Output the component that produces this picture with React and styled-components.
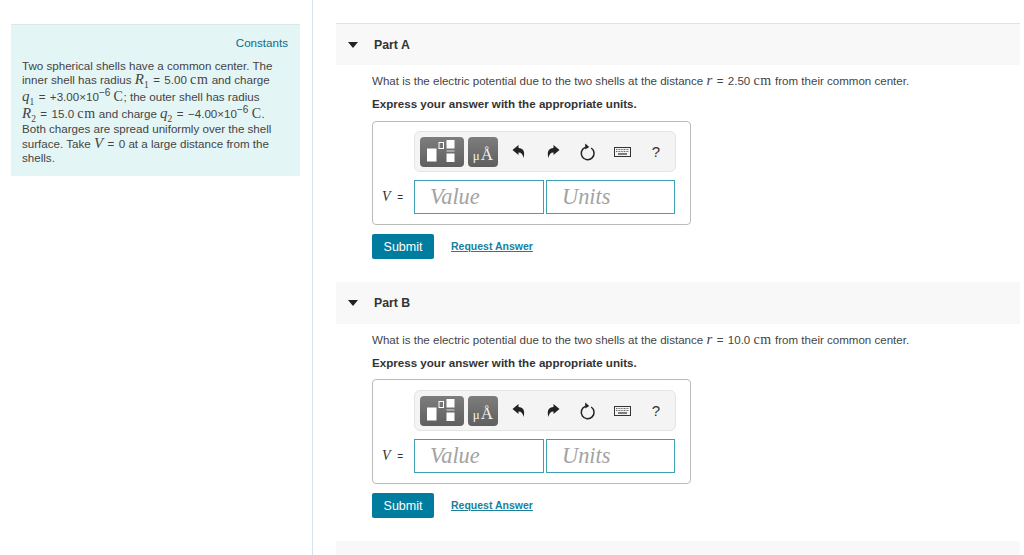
import React from 'react';
import styled, { createGlobalStyle } from 'styled-components';

const GlobalStyle = createGlobalStyle`
html, body {
  margin: 0;
  padding: 0;
  background: #fff;
  overflow: hidden;
}
body {
  font-family: "Liberation Sans", Arial, sans-serif;
  color: #333;
}
`;

const Page = styled.div`
display: flex;
width: 1024px;
height: 555px;
overflow: hidden;
`;

const Sidebar = styled.aside`
box-sizing: border-box;
width: 313px;
height: 555px;
flex: none;
padding: 24px 12px 0 11px;
border-right: 1px solid #d4e3ee;
`;

const InfoPanel = styled.div`
box-sizing: border-box;
height: 152px;
padding: 11px 12px 0 11px;
background: #e4f5f6;
border-top: 1px solid #dbe7ea;
`;

const ConstantsLink = styled.div`
text-align: right;
font-size: 11.6px;
line-height: 14px;
color: #0f6a85;
margin-bottom: 8px;
`;

const InfoLine = styled.div`
height: ${p => p.$h}px;
font-size: 11.6px;
line-height: ${p => p.$h}px;
color: #444;
white-space: nowrap;
`;

const Main = styled.main`
flex: none;
width: 684px;
margin-left: 23px;
padding-top: 23px;
`;

const Section = styled.section`
height: 259px;
`;

const PartHeader = styled.div`
box-sizing: border-box;
display: flex;
align-items: center;
height: 42px;
background: #f8f8f8;
border-top: ${p => (p.$ruled ? '1px solid #e2e2e2' : '0')};
`;

const Caret = styled.span`
width: 0;
height: 0;
margin-left: 12px;
margin-right: 16px;
border-left: 5px solid transparent;
border-right: 5px solid transparent;
border-top: 6px solid #222;
`;

const PartTitle = styled.h2`
margin: 0;
font-size: 12.3px;
font-weight: 700;
color: #333;
`;

const Body = styled.div`
padding: 9px 0 0 36px;
`;

const Question = styled.p`
margin: 0 0 7px;
font-size: 11.55px;
line-height: 15px;
color: #444;
white-space: nowrap;
`;

const Instruction = styled.p`
margin: 0 0 ${p => (p.$low ? 10 : 9)}px;
font-size: 11.6px;
line-height: 15px;
font-weight: 700;
color: #333;
`;

const AnswerBox = styled.div`
box-sizing: border-box;
width: 319px;
height: ${p => (p.$low ? 104 : 105)}px;
padding: ${p => (p.$low ? 9 : 10)}px 15px 0 9px;
border: 1px solid #bbb;
border-radius: 4px;
`;

const Toolbar = styled.div`
box-sizing: border-box;
display: flex;
align-items: center;
width: 262px;
height: 41px;
margin-left: 32px;
padding-left: 5px;
background: #f4f4f4;
border: 1px solid #e4e4e4;
border-radius: 6px;
`;

const TemplateButton = styled.div`
display: flex;
align-items: center;
justify-content: center;
box-sizing: border-box;
flex: none;
width: ${p => p.$w}px;
height: 30px;
margin-right: 4px;
border-radius: 4px;
background: linear-gradient(#7d7d7d, #5f5f5f);
color: #f2f2f2;
svg { display: block; }
`;

const UnitButton = styled(TemplateButton)`
align-items: baseline;
font-family: "Liberation Serif", serif;
font-size: 17px;
line-height: 35px;
`;

const MicroSign = styled.span`
font-size: 13px;
margin-right: 1px;
`;

const ToolIcon = styled.div`
display: flex;
align-items: center;
justify-content: center;
flex: none;
width: ${p => p.$w}px;
color: #333;
font-size: 15px;
`;

const InputRow = styled.div`
display: flex;
align-items: center;
margin-top: 8px;
`;

const VarLabel = styled.div`
flex: none;
width: 32px;
font-size: 10px;
color: #333;
white-space: nowrap;
word-spacing: 4px;
i { font-family: "Liberation Serif", serif; font-size: 14px; }
`;

const Field = styled.div`
box-sizing: border-box;
display: flex;
align-items: center;
flex: none;
width: ${p => p.$w}px;
height: 34px;
margin-right: 2px;
padding-left: 15px;
border: 1px solid #3f9fb5;
font-family: "Liberation Serif", serif;
font-style: italic;
font-size: 22.4px;
color: #a3a3a3;
`;

const Actions = styled.div`
display: flex;
align-items: center;
margin-top: 9px;
`;

const SubmitButton = styled.button`
box-sizing: border-box;
width: 62px;
height: 25px;
padding: 0;
border: 0;
border-radius: 2px;
background: #007c9e;
color: #fff;
font-family: inherit;
font-size: 12.5px;
`;

const RequestLink = styled.a`
margin: 0 0 2px 17px;
font-size: 10.5px;
font-weight: 700;
color: #1a7f9c;
text-decoration: underline;
`;

const M = styled.span`
font-family: "Liberation Serif", serif;
font-size: ${p => (p.$up ? 14 : 15)}px;
font-style: ${p => (p.$up ? 'normal' : 'italic')};
letter-spacing: ${p => (p.$up ? '0.6px' : '0')};
line-height: 0;
sub { font-size: 9.5px; line-height: 0; font-style: normal; }
`;

const Eq = styled.span`
margin: 0 1.2px;
`;

const Sup = styled.sup`
font-size: 10px;
line-height: 0;
`;

const TemplateIcon = () => (
  <svg width="43" height="30" viewBox="0 0 43 30">
    <rect x="6" y="11.5" width="9.5" height="13" fill="#fff" />
    <rect x="18" y="5.5" width="4.5" height="6" fill="none" stroke="#fff" strokeWidth="1" />
    <rect x="25.5" y="3" width="8" height="8.5" fill="#fff" />
    <rect x="25.5" y="13.5" width="8" height="1" fill="#ddd" />
    <rect x="25.5" y="16.5" width="8" height="8.5" fill="#fff" />
  </svg>
);

const ArrowIcon = ({ flip }) => (
  <svg width="14" height="15" viewBox="0 0 14 15" style={flip ? { transform: 'scaleX(-1)' } : undefined}>
    <path d="M0.5 6 L6.5 1 V4 C11 4 13.5 7.5 11.5 14 C11 10.5 9.5 8.5 6.5 8.5 V11 Z" fill="#222" />
  </svg>
);

const ResetIcon = () => (
  <svg width="17" height="19" viewBox="0 0 17 19">
    <path d="M6.2 5.4 A6.4 6.4 0 1 0 12.2 6" fill="none" stroke="#222" strokeWidth="1.5" />
    <path d="M6.2 1.6 L10.2 4.9 L6.2 7.6 Z" fill="#222" />
  </svg>
);

const KeyboardIcon = () => (
  <svg width="17" height="10" viewBox="0 0 17 10">
    <rect x="0.5" y="0.5" width="16" height="9" fill="#f4f4f4" stroke="#333" />
    <path d="M2 2.5 H15 M2 4.5 H15" stroke="#666" strokeWidth="1" strokeDasharray="1 0.6" />
    <path d="M4 7 H13" stroke="#555" strokeWidth="1.5" />
  </svg>
);

const Part = ({ name, ruled, distance, low }) => (
  <Section>
    <PartHeader $ruled={ruled}>
      <Caret />
      <PartTitle>{name}</PartTitle>
    </PartHeader>
    <Body>
      <Question>
        What is the electric potential due to the two shells at the distance <M>r</M> <Eq>=</Eq> {distance} <M $up>cm</M> from their common center.
      </Question>
      <Instruction $low={low}>Express your answer with the appropriate units.</Instruction>
      <AnswerBox $low={low}>
        <Toolbar>
          <TemplateButton $w={44}><TemplateIcon /></TemplateButton>
          <UnitButton $w={30}><MicroSign>μ</MicroSign>Å</UnitButton>
          <ToolIcon $w={34}><ArrowIcon /></ToolIcon>
          <ToolIcon $w={34}><ArrowIcon flip /></ToolIcon>
          <ToolIcon $w={35}><ResetIcon /></ToolIcon>
          <ToolIcon $w={34}><KeyboardIcon /></ToolIcon>
          <ToolIcon $w={34}>?</ToolIcon>
        </Toolbar>
        <InputRow>
          <VarLabel><i>V</i> =</VarLabel>
          <Field $w={130}>Value</Field>
          <Field $w={129}>Units</Field>
        </InputRow>
      </AnswerBox>
      <Actions>
        <SubmitButton>Submit</SubmitButton>
        <RequestLink>Request Answer</RequestLink>
      </Actions>
    </Body>
  </Section>
);

export default function App() {
  return (
    <Page>
      <GlobalStyle />
      <Sidebar>
        <InfoPanel>
          <ConstantsLink>Constants</ConstantsLink>
          <InfoLine $h={15}>Two spherical shells have a common center. The</InfoLine>
          <InfoLine $h={14}>inner shell has radius <M>R<sub>1</sub></M> <Eq>=</Eq> 5.00 <M $up>cm</M> and charge</InfoLine>
          <InfoLine $h={19}><M>q<sub>1</sub></M> <Eq>=</Eq> +3.00×10<Sup>−6</Sup> <M $up>C</M>; the outer shell has radius</InfoLine>
          <InfoLine $h={15}><M>R<sub>2</sub></M> <Eq>=</Eq> 15.0 <M $up>cm</M> and charge <M>q<sub>2</sub></M> <Eq>=</Eq> −4.00×10<Sup>−6</Sup> <M $up>C</M>.</InfoLine>
          <InfoLine $h={16}>Both charges are spread uniformly over the shell</InfoLine>
          <InfoLine $h={13}>surface. Take <M>V</M> <Eq>=</Eq> 0 at a large distance from the</InfoLine>
          <InfoLine $h={15}>shells.</InfoLine>
        </InfoPanel>
      </Sidebar>
      <Main>
        <Part name="Part A" ruled low distance="2.50" />
        <Part name="Part B" distance="10.0" />
        <PartHeader />
      </Main>
    </Page>
  );
}
